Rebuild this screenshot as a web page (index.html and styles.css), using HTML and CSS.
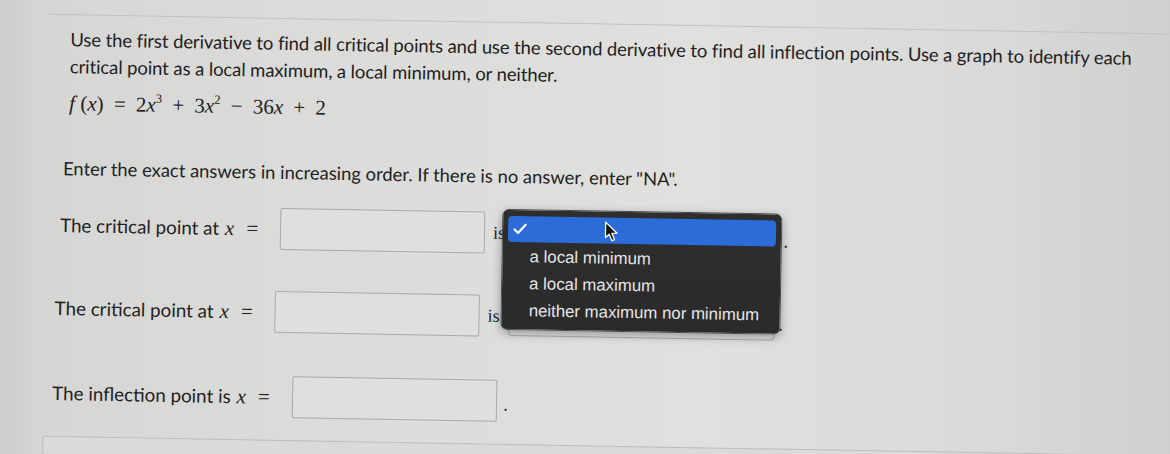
FILE: index.html
```html
<!DOCTYPE html>
<html lang="en">
<head>
<meta charset="utf-8">
<title>Critical points</title>
<link rel="stylesheet" href="styles.css">
</head>
<body>
<div class="shell">
  <div class="gutter"></div>
  <main class="panel">
    <p class="question">Use the first derivative to find all critical points and use the second derivative to find all inflection points. Use a graph to identify each critical point as a local maximum, a local minimum, or neither.</p>
    <p class="formula"><i>f</i> (<i>x</i>) <span class="op">=</span> 2<i>x</i><sup>3</sup> <span class="op">+</span> 3<i>x</i><sup>2</sup> <span class="op">−</span> 36<i>x</i> <span class="op">+</span> 2</p>
    <p class="instr">Enter the exact answers in increasing order. If there is no answer, enter "NA".</p>

    <div class="row row1">
      <span class="label">The critical point at <i class="mx">x</i><span class="eq">=</span></span>
      <span class="box"></span>
      <span class="is">is</span>
      <span class="select-wrap">
        <span class="select"></span>
        <div class="menu">
          <div class="item active">
            <svg class="check" width="14" height="12" viewBox="0 0 14 12"><polyline points="1.5,6.5 5,10 12.5,1.5" fill="none" stroke="#fff" stroke-width="2.2" stroke-linecap="round" stroke-linejoin="round"/></svg>
            <svg class="cursor" width="16" height="22" viewBox="0 0 16 22"><path d="M1.5 1.5 L1.5 17 L5.2 13.6 L8 20 L10.6 18.9 L7.9 12.6 L13 12.4 Z" fill="#111" stroke="#fff" stroke-width="1.3" stroke-linejoin="round"/></svg>
          </div>
          <div class="item">a local minimum</div>
          <div class="item">a local maximum</div>
          <div class="item">neither maximum nor minimum</div>
        </div>
      </span>
      <span class="dot">.</span>
    </div>

    <div class="row row2">
      <span class="label">The critical point at <i class="mx">x</i><span class="eq">=</span></span>
      <span class="box"></span>
      <span class="is">is</span>
      <span class="select-wrap"><span class="select"></span></span>
      <span class="dot">.</span>
    </div>

    <div class="row row3">
      <span class="label">The inflection point is <i class="mx">x</i><span class="eq">=</span></span>
      <span class="box"></span>
      <span class="dot">.</span>
    </div>

    <div class="next-card"></div>
  </main>
</div>
</body>
</html>
```

FILE: styles.css
```css
html, body {
  margin: 0;
  height: 100%;
}
body {
  background: linear-gradient(90deg, #cdcdcb 0, #d6d6d4 40px, #dbdbd9 300px, #e0e0de 700px, #d9d9d7 1000px, #cfcfcd 1170px);
  overflow: hidden;
  font-family: Lato, "Open Sans", sans-serif;
  color: #222;
}
.shell {
  display: flex;
  width: 1170px;
  height: 454px;
  overflow: hidden;
  transform: rotate(1deg);
  transform-origin: 0 0;
}
.gutter {
  width: 50px;
  flex: none;
}
.panel {
  flex: 1;
  margin-top: 13px;
  border-top: 1px solid #c2c2c0;
  padding: 11px 0 0 21px;
  display: flex;
  flex-direction: column;
  align-items: flex-start;
}
p { margin: 0; }
.question {
  font-size: 18.5px;
  line-height: 27px;
  width: 1085px;
  letter-spacing: -0.1px;
}
.formula {
  margin-top: 10px;
  font-family: "Liberation Serif", "DejaVu Serif", serif;
  font-size: 21px;
  line-height: 27px;
}
.formula .op {
  margin: 0 5px;
}
.formula sup {
  font-size: 12.5px;
  vertical-align: 9px;
  line-height: 0;
}
.instr {
  margin-top: 38px;
  margin-left: -5px;
  font-size: 18.4px;
  line-height: 27px;
}
.row {
  display: flex;
  align-items: center;
  height: 42px;
  margin-left: -7px;
}
.row1 { margin-top: 22px; }
.row2 { margin-top: 41px; margin-left: -11px; }
.row3 { margin-top: 43px; margin-left: -12px; }
.label {
  font-size: 18.8px;
  white-space: nowrap;
}
.mx {
  font-family: "Liberation Serif", serif;
  font-size: 21px;
  margin-left: 1px;
}
.eq {
  font-family: "Liberation Serif", serif;
  font-size: 21px;
  margin-left: 12px;
}
.box {
  width: 203px;
  height: 40px;
  margin-left: 22px;
  border: 1px solid #a9a9a7;
  border-radius: 2px;
  background: #dfdfdd;
}
.is {
  margin-left: 8px;
  font-family: "Liberation Serif", serif;
  font-size: 18px;
}
.select-wrap {
  position: relative;
  margin-left: 9px;
}
.select {
  display: block;
  width: 264px;
  height: 38px;
  border: 1px solid #adadab;
  border-radius: 4px;
  background: #e3e3e1;
}
.dot {
  margin-left: 4px;
  font-size: 17px;
  align-self: center;
  padding-top: 6px;
}
.row3 .dot { margin-left: 7px; }
.menu {
  position: absolute;
  left: -12px;
  top: -4px;
  width: 268px;
  padding: 6px 5px 5px;
  background: linear-gradient(180deg, #2e2e2e, #2a2a2a);
  border: 1px solid #4a4a4a;
  border-radius: 7px;
  box-shadow: 0 3px 10px rgba(0,0,0,0.35);
  font-family: "Liberation Sans", Arial, sans-serif;
  font-size: 16.8px;
  color: #e6e6e6;
  z-index: 2;
}
.item {
  position: relative;
  height: 27px;
  line-height: 27px;
  padding-left: 22px;
  white-space: nowrap;
}
.item.active {
  background: #2c6cd8;
  border-radius: 4px;
  height: 26px;
  margin-bottom: 1px;
}
.check {
  position: absolute;
  left: 5px;
  top: 7px;
}
.cursor {
  position: absolute;
  left: 96px;
  top: 3px;
}
.next-card {
  margin-top: 22px;
  width: 1130px;
  height: 60px;
  border: 1px solid #bdbdbb;
  border-radius: 3px;
  background: #dadad8;
  margin-left: -21px;
}
```
